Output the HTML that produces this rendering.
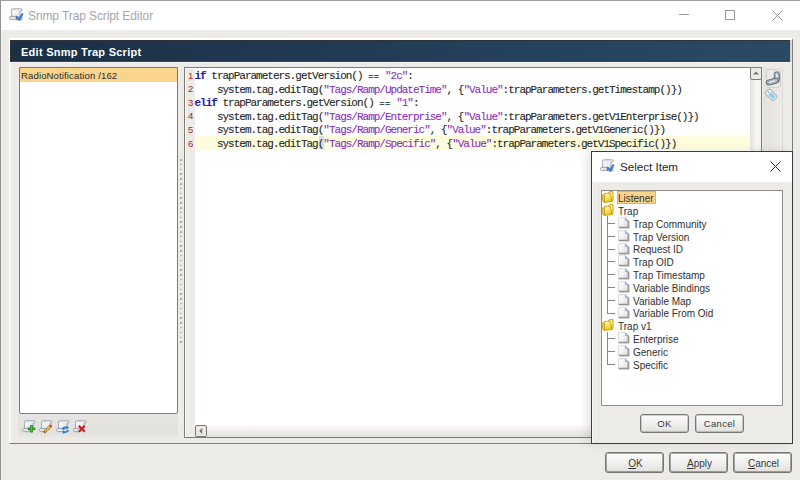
<!DOCTYPE html>
<html><head><meta charset="utf-8">
<style>
*{margin:0;padding:0;box-sizing:border-box}
html,body{width:800px;height:480px;overflow:hidden;background:#ecebe7;font-family:"Liberation Sans",sans-serif;}
.a{position:absolute}
svg.i{position:absolute;overflow:visible}
#win{left:0;top:0;width:800px;height:480px;border-left:1px solid #939393;border-top:1px solid #a0a0a0}
#title{left:1px;top:1px;width:799px;height:29px;background:#fff}
#ttext{left:28px;top:8px;font-size:12px;letter-spacing:-0.1px;color:#a6a6a6;white-space:nowrap;line-height:16px}
#panel{left:9px;top:38px;width:784px;height:406px;border-top:2px solid #fff;border-left:1px solid #fff;box-shadow:inset 1px 0 0 #f5f4f1;border-right:1px solid #7c7c7c;border-bottom:1px solid #7c7c7c}
#hdr{left:10px;top:40px;width:780px;height:22px;background:linear-gradient(to right,#1b2f45,#24405a 60%,#2b4a64);border-top:1px solid #333;border-left:1px solid #333;border-bottom:1px solid #3d4650}
#htext{left:21px;top:44.6px;font-size:11px;letter-spacing:0.26px;font-weight:bold;color:#fff;line-height:14px;white-space:nowrap}
#hline{left:10px;top:62px;width:782px;height:1px;background:#f4f3f0}
#list{left:19px;top:67px;width:159px;height:347px;background:#fff;border:1px solid #7d7b74;border-radius:0 0 2px 2px}
#sel{left:20px;top:68px;width:157px;height:14px;background:#f9d48b}
#seltext{left:21px;top:70.4px;font-size:9.5px;letter-spacing:0.15px;color:#2a2a2a;line-height:12px;white-space:nowrap}
#ltool{left:18px;top:414px;width:160px;height:24px;background:linear-gradient(#e6e4e0,#e3e1dd 80%,#ebe9e6)}
#code{left:184px;top:67px;width:578px;height:371px;background:#fff;border:1px solid #7d7b74}
#gutter{left:186px;top:69px;width:9px;height:368px;background:#ecebe7}
#hl{left:195px;top:136px;width:555px;height:14px;background:#fdfddd}
.ln{position:absolute;left:188px;font-size:9.5px;color:#a8242e;line-height:12px}
.cl{position:absolute;left:194.5px;font-family:"Liberation Mono",monospace;font-size:11px;letter-spacing:-1px;color:#262626;-webkit-text-stroke:0.1px currentColor;white-space:pre;line-height:12px}
.kw{color:#1f1fa5;font-weight:bold}
.eq{font-size:9px;letter-spacing:0.2px}
.st{color:#8a2fc0}
#vsb{left:750px;top:67px;width:11px;height:358px;background:linear-gradient(to right,#e3e2de,#f5f5f3 55%,#f3f3f1)}
#vup{left:750px;top:67px;width:12px;height:13px;background:#ebe9e5;border:1px solid #7d7b74;border-radius:0 0 2px 2px}
#hsb{left:195px;top:425px;width:555px;height:12px;background:linear-gradient(#fbfbfa,#e3e1dd)}
#hleft{left:195px;top:425px;width:12px;height:12px;background:#ebe9e5;border:1px solid #7d7b74;border-radius:2px}
#rtool{left:763px;top:67px;width:20px;height:371px;background:linear-gradient(to right,#e4e3df,#ebeae6);border-right:1px solid #dddcd8}
#lbtn{left:766px;top:69px;width:15px;height:19px;border:1px solid #d2d0cb;border-radius:3px;background:#ebe9e5}
#splitdots{left:180px;top:159px;width:2px;height:186px;background:repeating-linear-gradient(#a3a19b 0 1.5px,transparent 1.5px 4.8px);opacity:0.9}
#dlg{left:591px;top:151px;width:202px;height:293px;background:#ecebe7;border:1px solid #3c3c3c;box-shadow:-5px 0 9px -1px rgba(0,0,0,0.11),inset 1px 0 0 #f7f7f5}
#dtitle{left:592px;top:152px;width:200px;height:30px;background:#fff}
#dttext{left:620px;top:159.5px;font-size:11.6px;color:#1e1e1e;line-height:14px;white-space:nowrap}
#tree{left:601px;top:190px;width:182px;height:216px;background:#fff;border:1px solid #8e8c87}
.tr{position:absolute;font-size:10px;color:#303030;line-height:12px;white-space:nowrap}
#lsel{left:617px;top:191px;width:39px;height:13px;background:#f9d48b;border:1px solid #e3b45f}
.btn{position:absolute;border:1px solid #7f7d78;border-radius:3px;background:linear-gradient(#fcfcfb,#f1f0ee 50%,#e2e0dc);font-size:9.5px;letter-spacing:0.3px;color:#383838;text-align:center;line-height:17px;border-color:#787876;box-shadow:inset 0 0 0 0.7px rgba(60,60,60,0.3)}
u{text-underline-offset:1px}
.vl{position:absolute;background:#808a95}
.mb{top:452px;width:59px;height:21px;line-height:18px;padding:2px 0 0 2px;font-size:10px;letter-spacing:0;border-color:#767674;box-shadow:inset 0 0 0 1px rgba(70,70,70,0.45)}
</style></head><body>
<svg width="0" height="0" style="position:absolute">
<defs>
<linearGradient id="gpaper" x1="0" y1="0" x2="1" y2="1"><stop offset="0" stop-color="#ffffff"/><stop offset="1" stop-color="#d9dee4"/></linearGradient>
<linearGradient id="gfold" x1="0" y1="0" x2="0.3" y2="1"><stop offset="0" stop-color="#fffbd0"/><stop offset="0.45" stop-color="#fbe872"/><stop offset="1" stop-color="#f0c818"/></linearGradient>
<linearGradient id="gdoc" x1="0" y1="0" x2="1" y2="1"><stop offset="0" stop-color="#ffffff"/><stop offset="0.5" stop-color="#f2f2f2"/><stop offset="1" stop-color="#d4d4d4"/></linearGradient>
<symbol id="scroll" viewBox="0 0 16 16">
<path d="M3.6,2 C3.2,4 4,6 3.4,9.2 L11.8,9.2 C12.4,6.5 11.6,4.5 12.4,1.8 Z" fill="url(#gpaper)" stroke="#939aa2" stroke-width="0.85"/>
<path d="M3.4,2.4 C3.4,0.8 4.4,0.8 5,0.8 L13,0.8 C14.6,0.8 14.6,2.8 13.2,3 L12.2,3" fill="#eef1f4" stroke="#939aa2" stroke-width="0.85"/>
<path d="M1.4,9.8 C1.4,8.4 2.4,8.4 3,8.4 L8.4,8.4 L8.4,11.6 L2.6,11.6 C1.6,11.6 1.4,10.8 1.4,9.8 Z" fill="#e3e7eb" stroke="#939aa2" stroke-width="0.85"/>
</symbol>
<symbol id="check" viewBox="0 0 16 16">
<path d="M8.4,8.2 L8.4,11.8 L13.8,11.8 L13.8,8.6" fill="none" stroke="#55607a" stroke-width="0.9" opacity="0.7"/>
<path d="M8.8,9 L11.3,11.6 L14.3,6.2" fill="none" stroke="#23457a" stroke-width="2.4" stroke-linecap="round" stroke-linejoin="round" opacity="0.45"/>
<path d="M8.8,9 L11.3,11.6 L14.3,6.2" fill="none" stroke="#2f80d8" stroke-width="1.6" stroke-linecap="round" stroke-linejoin="round"/>
</symbol>
<symbol id="folder" viewBox="0 0 12 12">
<path d="M6.6,1.4 L7.4,0.6 L11,0.6 L11,9.6 L9.2,10.4 Z" fill="#f4d848" stroke="#c49812" stroke-width="0.9"/>
<rect x="7.7" y="1.3" width="2.5" height="4.6" fill="#ffffff"/>
<path d="M2.3,4.2 L-0.2,4 L1.1,10.6 L2.3,11.4 Z" fill="#f6e27a" stroke="#c49812" stroke-width="0.9"/>
<path d="M2.4,2.4 L8.4,2.1 L9.8,10.5 L2.4,11.4 Z" fill="url(#gfold)" stroke="#c49812" stroke-width="0.9"/>
</symbol>
<symbol id="doc" viewBox="0 0 12 12">
<path d="M0.6,0.6 L7.3,0.6 L10.6,3.9 L10.6,10.6 L0.6,10.6 Z" fill="url(#gdoc)" stroke="#cfcfcf" stroke-width="0.7"/>
<path d="M10.4,3.8 L10.4,10.4 L0.8,10.4" fill="none" stroke="#7a7a7a" stroke-width="1.5" opacity="0.75"/>
<path d="M11.3,4.5 L11.3,11.3 L1.5,11.3" fill="none" stroke="#bdbdbd" stroke-width="0.8" opacity="0.7"/>
<path d="M7.3,0.6 L10.6,3.9 L7.3,3.9 Z" fill="#aab8d2" stroke="#95a5c0" stroke-width="0.5"/>
</symbol>
</defs></svg>
<div class="a" id="win"></div>
<div class="a" id="title"></div>
<svg class="i" style="left:8px;top:8px" width="16" height="16" viewBox="0 0 16 16"><use href="#scroll"/><use href="#check"/></svg>
<div class="a" id="ttext">Snmp Trap Script Editor</div>
<svg class="i" style="left:679px;top:14px" width="10" height="1" viewBox="0 0 10 1"><rect x="0" y="0" width="10" height="1" fill="#9a9a9a"/></svg>
<svg class="i" style="left:725px;top:10px" width="10" height="10" viewBox="0 0 10 10"><rect x="0.5" y="0.5" width="9" height="9" fill="none" stroke="#9a9a9a" stroke-width="1"/></svg>
<svg class="i" style="left:772px;top:10px" width="11" height="11" viewBox="0 0 11 11"><path d="M0.5,0.5 L10.5,10.5 M10.5,0.5 L0.5,10.5" stroke="#9a9a9a" stroke-width="1"/></svg>
<div class="a" id="panel"></div>
<div class="a" id="hdr"></div>
<div class="a" id="htext">Edit Snmp Trap Script</div>
<div class="a" id="hline"></div>
<div class="a" style="left:790px;top:40px;width:2px;height:22px;background:linear-gradient(to right,#c9c9c7,#e2e1de)"></div>
<div class="a" id="list"></div>
<div class="a" id="sel"></div>
<div class="a" id="seltext">RadioNotification /162</div>
<div class="a" id="ltool"></div>
<svg class="i" style="left:21px;top:420px" width="16" height="16" viewBox="0 0 16 16"><use href="#scroll"/><path d="M10.5,5 V12.4 M6.8,8.7 H14.2" stroke="#1d7d1d" stroke-width="2.6"/><path d="M10.5,5.6 V11.8 M7.4,8.7 H13.6" stroke="#47c43a" stroke-width="1.1"/></svg>
<svg class="i" style="left:38px;top:420px" width="16" height="16" viewBox="0 0 16 16"><use href="#scroll"/><path d="M6.8,11.8 L12.6,6" stroke="#a37a14" stroke-width="2.7" stroke-linecap="round"/><path d="M7,11.6 L12.4,6.2" stroke="#f5d448" stroke-width="1.3"/><path d="M12.1,5.3 L13.7,6.9" stroke="#c83a3a" stroke-width="1.7"/><path d="M6.2,12.4 L7,11.6" stroke="#333" stroke-width="1.2"/></svg>
<svg class="i" style="left:55px;top:420px" width="16" height="16" viewBox="0 0 16 16"><use href="#scroll"/><path d="M7.2,9.2 Q9.8,6.6 13,7.6" fill="none" stroke="#2e80d0" stroke-width="1.9"/><path d="M12,5.8 L14,7.9 L11.6,8.9 Z" fill="#2e80d0"/><path d="M13.6,10.4 Q11,13 7.8,12" fill="none" stroke="#2e80d0" stroke-width="1.9"/><path d="M8.8,13.8 L6.8,11.7 L9.2,10.7 Z" fill="#2e80d0"/></svg>
<svg class="i" style="left:72px;top:420px" width="16" height="16" viewBox="0 0 16 16"><use href="#scroll"/><path d="M6.8,5.8 L12.8,11.8 M12.8,5.8 L6.8,11.8" stroke="#c81f1f" stroke-width="2"/></svg>
<div class="a" id="splitdots"></div>
<div class="a" id="code"></div>
<div class="a" id="gutter"></div>
<div class="a" id="hl"></div>
<div class="a" style="left:318.5px;top:136.2px;width:5.4px;height:12.6px;background:#cddfea"></div>
<div class="ln" style="top:69.6px">1</div>
<div class="cl" style="top:70.0px"><span class="kw">if</span> trapParameters.getVersion() <span class="eq">==</span> <span class="st">"2c"</span>:</div>
<div class="ln" style="top:83.2px">2</div>
<div class="cl" style="top:83.6px">    system.tag.editTag(<span class="st">"Tags/Ramp/UpdateTime"</span>, {<span class="st">"Value"</span>:trapParameters.getTimestamp()})</div>
<div class="ln" style="top:96.8px">3</div>
<div class="cl" style="top:97.2px"><span class="kw">elif</span> trapParameters.getVersion() <span class="eq">==</span> <span class="st">"1"</span>:</div>
<div class="ln" style="top:110.4px">4</div>
<div class="cl" style="top:110.8px">    system.tag.editTag(<span class="st">"Tags/Ramp/Enterprise"</span>, {<span class="st">"Value"</span>:trapParameters.getV1Enterprise()})</div>
<div class="ln" style="top:124.0px">5</div>
<div class="cl" style="top:124.4px">    system.tag.editTag(<span class="st">"Tags/Ramp/Generic"</span>, {<span class="st">"Value"</span>:trapParameters.getV1Generic()})</div>
<div class="ln" style="top:137.6px">6</div>
<div class="cl" style="top:138.0px">    system.tag.editTag(<span class="st">"Tags/Ramp/Specific"</span>, {<span class="st">"Value"</span>:trapParameters.getV1Specific()})</div>
<div class="a" id="vsb"></div>
<div class="a" id="vup"></div>
<svg class="i" style="left:752px;top:70px" width="8" height="6" viewBox="0 0 8 6"><path d="M1,4.6 L4,1.6 L7,4.6 Z" fill="#7b776b"/></svg>
<div class="a" id="hsb"></div>
<div class="a" id="hleft"></div>
<svg class="i" style="left:197px;top:427px" width="8" height="8" viewBox="0 0 8 8"><path d="M5.2,1 L2.2,4 L5.2,7 Z" fill="#7b776b"/></svg>
<div class="a" id="rtool"></div>
<div class="a" id="lbtn"></div>
<svg class="i" style="left:766px;top:70px" width="16" height="18" viewBox="0 0 16 18"><rect x="8.2" y="1.8" width="5.2" height="10.6" rx="2.4" fill="#a9b3bd" stroke="#6a7582" stroke-width="1"/><rect x="10" y="3.8" width="1.6" height="5" rx="0.8" fill="#e6e9ec"/><g transform="rotate(-16 6.5 11.5)"><rect x="0.2" y="9" width="12.4" height="5" rx="2.5" fill="#a9b3bd" stroke="#63707e" stroke-width="1"/><rect x="3" y="10.8" width="6.5" height="1.4" rx="0.7" fill="#e6e9ec"/></g></svg>
<svg class="i" style="left:764px;top:88px" width="14" height="14" viewBox="0 0 14 14"><g transform="rotate(-45 7.1 6.9)"><rect x="3.8" y="1.2" width="6.6" height="11.4" rx="1.5" fill="#f3f3f3" stroke="#b5b5b5" stroke-width="1.1"/><rect x="5.1" y="4.8" width="4" height="6.4" fill="#8ccdf3"/><circle cx="7.1" cy="3" r="0.75" fill="#a0a0a0"/></g></svg>
<div class="a" id="dlg"></div>
<div class="a" id="dtitle"></div>
<svg class="i" style="left:599px;top:159px" width="16" height="16" viewBox="0 0 16 16"><use href="#scroll"/><use href="#check"/></svg>
<div class="a" id="dttext">Select Item</div>
<svg class="i" style="left:770px;top:161px" width="11" height="11" viewBox="0 0 11 11"><path d="M0.5,0.5 L10.5,10.5 M10.5,0.5 L0.5,10.5" stroke="#222" stroke-width="1"/></svg>
<div class="a" id="tree"></div>
<div class="a" id="lsel"></div>
<svg class="i" style="left:602px;top:191.4px" width="12" height="12" viewBox="0 0 12 12"><use href="#folder"/></svg>
<div class="tr" style="left:618px;top:193.2px">Listener</div>
<svg class="i" style="left:602px;top:204.20000000000002px" width="12" height="12" viewBox="0 0 12 12"><use href="#folder"/></svg>
<div class="tr" style="left:618px;top:206.0px">Trap</div>
<svg class="i" style="left:618px;top:216.9px" width="12" height="12" viewBox="0 0 12 12"><use href="#doc"/></svg>
<div class="vl" style="left:607px;top:222.9px;width:8px;height:1px"></div>
<div class="tr" style="left:633px;top:218.8px">Trap Community</div>
<svg class="i" style="left:618px;top:229.70000000000002px" width="12" height="12" viewBox="0 0 12 12"><use href="#doc"/></svg>
<div class="vl" style="left:607px;top:235.7px;width:8px;height:1px"></div>
<div class="tr" style="left:633px;top:231.6px">Trap Version</div>
<svg class="i" style="left:618px;top:242.5px" width="12" height="12" viewBox="0 0 12 12"><use href="#doc"/></svg>
<div class="vl" style="left:607px;top:248.5px;width:8px;height:1px"></div>
<div class="tr" style="left:633px;top:244.4px">Request ID</div>
<svg class="i" style="left:618px;top:255.3px" width="12" height="12" viewBox="0 0 12 12"><use href="#doc"/></svg>
<div class="vl" style="left:607px;top:261.3px;width:8px;height:1px"></div>
<div class="tr" style="left:633px;top:257.2px">Trap OID</div>
<svg class="i" style="left:618px;top:268.1px" width="12" height="12" viewBox="0 0 12 12"><use href="#doc"/></svg>
<div class="vl" style="left:607px;top:274.1px;width:8px;height:1px"></div>
<div class="tr" style="left:633px;top:270.0px">Trap Timestamp</div>
<svg class="i" style="left:618px;top:280.9px" width="12" height="12" viewBox="0 0 12 12"><use href="#doc"/></svg>
<div class="vl" style="left:607px;top:286.9px;width:8px;height:1px"></div>
<div class="tr" style="left:633px;top:282.8px">Variable Bindings</div>
<svg class="i" style="left:618px;top:293.70000000000005px" width="12" height="12" viewBox="0 0 12 12"><use href="#doc"/></svg>
<div class="vl" style="left:607px;top:299.7px;width:8px;height:1px"></div>
<div class="tr" style="left:633px;top:295.6px">Variable Map</div>
<svg class="i" style="left:618px;top:306.5px" width="12" height="12" viewBox="0 0 12 12"><use href="#doc"/></svg>
<div class="vl" style="left:607px;top:312.5px;width:8px;height:1px"></div>
<div class="tr" style="left:633px;top:308.4px">Variable From Oid</div>
<svg class="i" style="left:602px;top:319.4px" width="12" height="12" viewBox="0 0 12 12"><use href="#folder"/></svg>
<div class="tr" style="left:618px;top:321.2px">Trap v1</div>
<svg class="i" style="left:618px;top:332.1px" width="12" height="12" viewBox="0 0 12 12"><use href="#doc"/></svg>
<div class="vl" style="left:607px;top:338.1px;width:8px;height:1px"></div>
<div class="tr" style="left:633px;top:334.0px">Enterprise</div>
<svg class="i" style="left:618px;top:344.9px" width="12" height="12" viewBox="0 0 12 12"><use href="#doc"/></svg>
<div class="vl" style="left:607px;top:350.9px;width:8px;height:1px"></div>
<div class="tr" style="left:633px;top:346.8px">Generic</div>
<svg class="i" style="left:618px;top:357.70000000000005px" width="12" height="12" viewBox="0 0 12 12"><use href="#doc"/></svg>
<div class="vl" style="left:607px;top:363.7px;width:8px;height:1px"></div>
<div class="tr" style="left:633px;top:359.6px">Specific</div>
<div class="vl" style="left:607px;top:216px;width:1px;height:97.5px"></div>
<div class="vl" style="left:607px;top:332px;width:1px;height:32.7px"></div>
<div class="btn" style="left:640px;top:414px;width:49px;height:19px">OK</div>
<div class="btn" style="left:695px;top:414px;width:49px;height:19px">Cancel</div>
<div class="btn mb" style="left:605px"><u>O</u>K</div>
<div class="btn mb" style="left:669px"><u>A</u>pply</div>
<div class="btn mb" style="left:733px"><u>C</u>ancel</div>
</body></html>
